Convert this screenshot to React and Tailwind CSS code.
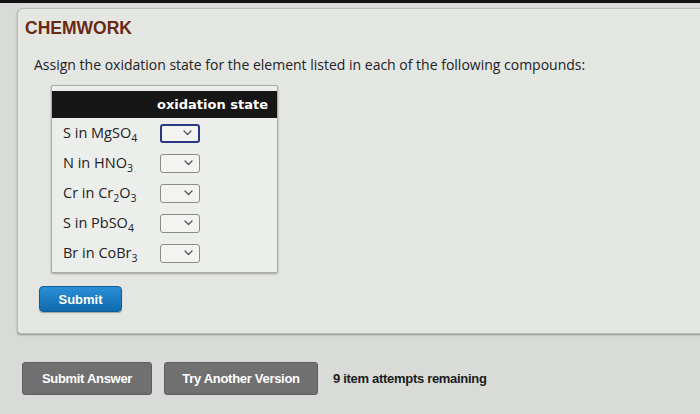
import React from "react";

const rows = [
  { el: "S", pre: "Mg", parts: [["S", ""], ["O", "4"]] },
  { el: "N", pre: "", parts: [["HN", ""], ["O", "3"]] },
  { el: "Cr", pre: "", parts: [["Cr", "2"], ["O", "3"]] },
  { el: "S", pre: "Pb", parts: [["S", ""], ["O", "4"]] },
  { el: "Br", pre: "", parts: [["Co", ""], ["Br", "3"]] },
];

const Chevron = () => (
  <svg width="9" height="6" viewBox="0 0 9 6" fill="none">
    <path d="M1 1l3.5 3.5L8 1" stroke="#555" strokeWidth="1.3" strokeLinecap="round" strokeLinejoin="round" />
  </svg>
);

const Select = ({ focused }) => (
  <div
    className={`w-[40px] h-[19px] rounded-[3px] bg-[#f3f4f2] flex items-center justify-end pr-[6px] ${
      focused ? "border-2 border-[#2c3784]" : "border border-[#8a8c8a]"
    }`}
  >
    <Chevron />
  </div>
);

export default function App() {
  return (
    <div className="w-[700px] h-[414px] bg-[#d8dbd8] overflow-hidden relative" style={{ fontFamily: "'Open Sans', sans-serif" }}>
      <div className="h-[3px] bg-[#111] w-full" />
      <div className="ml-[17px] mt-[5px] w-[700px] h-[326px] bg-[#e4e6e2] border border-[#b8bbb7] rounded-tl-[6px] rounded-bl-[4px] shadow-[0_1px_2px_rgba(0,0,0,0.35)] pt-[6px]">
        <div className="pl-[7px] text-[17.5px] font-bold text-[#6a2812]" style={{ fontFamily: "'Liberation Sans', Arial, sans-serif" }}>
          CHEMWORK
        </div>
        <div className="pl-[16px] mt-[14px] text-[14px] text-[#222] leading-[20px]">
          Assign the oxidation state for the element listed in each of the following compounds:
        </div>
        <div className="ml-[33px] mt-[10px] w-[227px] bg-[#eceeeb] border border-[#a9aca8] rounded-[2px] shadow-[0_1px_2px_rgba(0,0,0,0.3)] pt-[5px] pb-[4px]">
          <div className="h-[27px] bg-[#161616] flex items-center justify-end pr-[9px]">
            <span className="text-white text-[13px] font-bold" style={{ fontFamily: "'DejaVu Sans', Verdana, sans-serif" }}>
              oxidation state
            </span>
          </div>
          <div className="flex flex-col">
            {rows.map((r, i) => (
              <div key={i} className="h-[30px] flex items-center pl-[11px]">
                <div className="w-[97px] text-[14.5px] text-[#222]">
                  {r.el} in {r.pre}
                  {r.parts.map(([a, b], j) => (
                    <span key={j}>
                      {a}
                      {b && <sub className="text-[10.5px] top-[0.3em]">{b}</sub>}
                    </span>
                  ))}
                </div>
                <Select focused={i === 0} />
              </div>
            ))}
          </div>
        </div>
        <div className="ml-[21px] mt-[13px] w-[83px] h-[26px] rounded-[4px] bg-gradient-to-b from-[#2a8fd6] to-[#0f6aae] border border-[#0d5d99] flex items-center justify-center shadow-[0_1px_1px_rgba(0,0,0,0.3)]">
          <span className="text-white text-[13px] font-bold" style={{ fontFamily: "'Liberation Sans', Arial, sans-serif" }}>
            Submit
          </span>
        </div>
      </div>
      <div className="flex items-center mt-[28px] ml-[22px]" style={{ fontFamily: "'Liberation Sans', Arial, sans-serif" }}>
        <div className="w-[130px] h-[33px] bg-[#6f706f] rounded-[3px] border border-[#5d5e5d] flex items-center justify-center text-white text-[13px] font-bold tracking-[-0.3px]">
          Submit Answer
        </div>
        <div className="ml-[12px] w-[154px] h-[33px] bg-[#6f706f] rounded-[3px] border border-[#5d5e5d] flex items-center justify-center text-white text-[13px] font-bold tracking-[-0.3px]">
          Try Another Version
        </div>
        <div className="ml-[15px] text-[13px] font-bold text-[#1c1c1c] tracking-[-0.3px]">9 item attempts remaining</div>
      </div>
    </div>
  );
}
